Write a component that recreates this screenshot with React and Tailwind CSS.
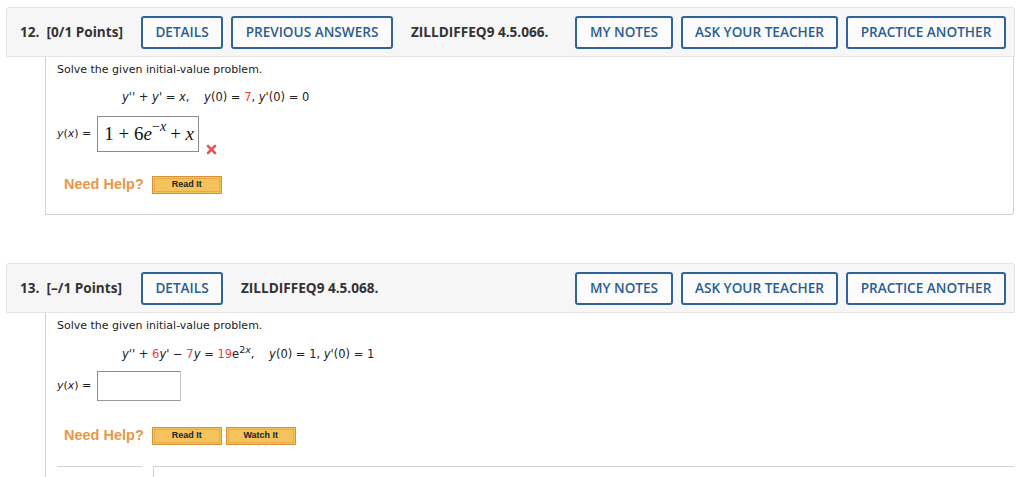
import React from 'react';

const btn =
  'h-[33px] flex items-center justify-center rounded-[3px] border-2 border-[#2f6399] bg-[#fbfbfb] text-[13.6px] font-semibold text-[#2b5d92]';

function Header({ num, points, code, children }) {
  return (
    <div className="h-[50px] flex items-center rounded-t-[3px] border border-[#e3e3e3] bg-[#f6f6f6] pl-[13px] pr-[8px] font-['Open_Sans',sans-serif]">
      <span className="w-[121px] shrink-0 whitespace-pre text-[13.6px] font-bold text-[#333]">
        {num}.  [{points} Points]
      </span>
      {children}
      <span className="text-[13.6px] font-bold text-[#333] ml-[18px]">{code}</span>
      <div className="ml-auto flex gap-[8px]">
        <div className={`${btn} w-[98px]`}>MY NOTES</div>
        <div className={`${btn} w-[157px]`}>ASK YOUR TEACHER</div>
        <div className={`${btn} w-[160px]`}>PRACTICE ANOTHER</div>
      </div>
    </div>
  );
}

function HelpButton({ label }) {
  return (
    <div className="h-[18px] w-[70px] border border-[#d5923a] bg-[#f4c35c] p-[1px]">
      <div className="h-full w-full border border-[#e9a946] flex items-center justify-center text-[9px] font-bold text-[#222] font-['Liberation_Sans',Arial,sans-serif]">
        {label}
      </div>
    </div>
  );
}

function NeedHelp({ buttons }) {
  return (
    <div className="flex items-center pl-[7px]">
      <span className="text-[14.5px] font-bold text-[#ea9744] font-['Liberation_Sans',Arial,sans-serif] mr-[8px]">
        Need Help?
      </span>
      <div className="flex gap-[4px]">
        {buttons.map((b) => (
          <HelpButton key={b} label={b} />
        ))}
      </div>
    </div>
  );
}

const red = 'text-[#e8413a]';

export default function App() {
  return (
    <div className="w-[1024px] h-[477px] overflow-hidden bg-white pt-[7px] pl-[6px] pr-[9px] font-['DejaVu_Sans',Verdana,sans-serif] text-[#222]">
      {/* question 12 */}
      <Header num="12" points="0/1" code="ZILLDIFFEQ9 4.5.066.">
        <div className="flex gap-[8px]">
          <div className={`${btn} w-[82px]`}>DETAILS</div>
          <div className={`${btn} w-[162px]`}>PREVIOUS ANSWERS</div>
        </div>
      </Header>
      <div className="ml-[39px] mr-[1px] h-[158px] border-l border-r border-b border-[#d2d2d2] rounded-br-[3px] pl-[11px] pt-[6px]">
        <p className="text-[11px] leading-[14px]">Solve the given initial-value problem.</p>
        <p className="text-[11.5px] leading-[14px] mt-[13px] ml-[65px] whitespace-pre">
          <i>y''</i> + <i>y'</i> = <i>x</i>,    <i>y</i>(0) = <span className={red}>7</span>, <i>y'</i>(0) = 0
        </p>
        <div className="flex items-center mt-[9px]">
          <span className="text-[11px] mr-[6px]"><i>y</i>(<i>x</i>) =</span>
          <div className="h-[36px] w-[102px] border border-[#8a8a8a] flex items-center pl-[6px] font-['Liberation_Serif',serif] text-[19px] text-[#111] whitespace-nowrap">
            1 + 6<i>e</i>
            <sup className="text-[14px] -top-[7px] relative">−<i>x</i></sup>
            <span className="ml-[4px]">+ <i>x</i></span>
          </div>
          <svg width="11" height="11" viewBox="0 0 11 11" className="ml-[7px] mt-[31px]">
            <path d="M2 2 L9 9 M9 2 L2 9" stroke="#e4575b" strokeWidth="2.6" strokeLinecap="round" />
          </svg>
        </div>
        <div className="mt-[19px]">
          <NeedHelp buttons={['Read It']} />
        </div>
      </div>

      {/* question 13 */}
      <div className="mt-[48px]">
        <Header num="13" points="–/1" code="ZILLDIFFEQ9 4.5.068.">
          <div className={`${btn} w-[82px]`}>DETAILS</div>
        </Header>
      </div>
      <div className="ml-[39px] mr-[1px] h-[200px] border-l border-[#d2d2d2] pl-[11px] pt-[6px]">
        <p className="text-[11px] leading-[14px]">Solve the given initial-value problem.</p>
        <p className="text-[11.5px] leading-[14px] mt-[14px] ml-[65px] whitespace-pre">
          <i>y''</i> + <span className={red}>6</span><i>y'</i> − <span className={red}>7</span><i>y</i> = <span className={red}>19</span>e<sup className="text-[9.5px] relative -top-[5px]">2<i>x</i></sup>,    <i>y</i>(0) = 1, <i>y'</i>(0) = 1
        </p>
        <div className="flex items-center mt-[10px]">
          <span className="text-[11px] mr-[6px]"><i>y</i>(<i>x</i>) =</span>
          <div className="h-[30px] w-[84px] border border-[#8a8a8a] border-r-[#c8c8c8] border-b-[#9a9a9a]" />
        </div>
        <div className="mt-[24px]">
          <NeedHelp buttons={['Read It', 'Watch It']} />
        </div>
        <div className="flex items-start mt-[19px]">
          <div className="w-[85px] border-t border-[#d2d2d2]" />
          <div className="ml-[11px] flex-1 h-[20px] border-t border-l border-[#d2d2d2]" />
        </div>
      </div>
    </div>
  );
}
